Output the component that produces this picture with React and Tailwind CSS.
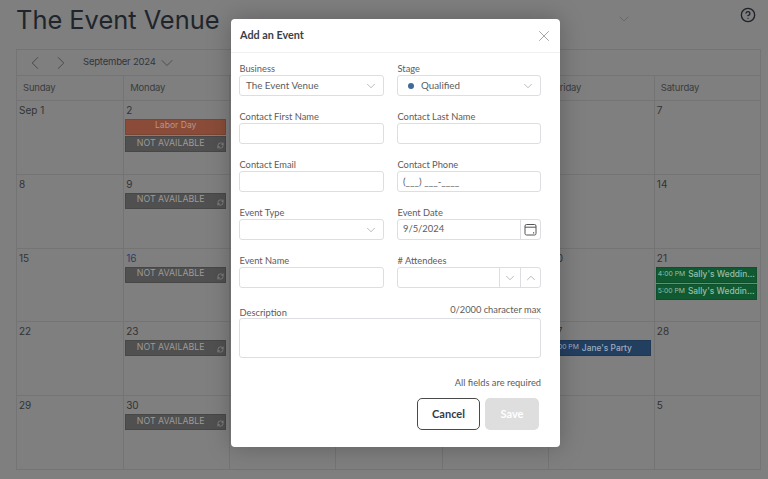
import React from "react";
import { ChevronDown, ChevronUp, ChevronLeft, ChevronRight, X, CircleHelp, RefreshCw } from "lucide-react";

const days = ["Sunday", "Monday", "", "", "", "Friday", "Saturday"];
const weeks = [
  ["Sep 1", "2", "", "", "", "", "7"],
  ["8", "9", "", "", "", "", "14"],
  ["15", "16", "", "", "", "20", "21"],
  ["22", "23", "", "", "", "27", "28"],
  ["29", "30", "", "", "", "", "5"],
];

function Bar({ className, children }) {
  return (
    <div className={`mx-[1px] mb-[1px] flex h-4 items-center overflow-hidden whitespace-nowrap border border-black/10 leading-none ${className}`}>
      {children}
    </div>
  );
}

function NotAvailable() {
  return (
    <Bar className="relative justify-center bg-[#505050] pb-[2px] text-[8.8px] text-[#9a9a9a]">
      <span className="mr-[10px]">NOT AVAILABLE</span>
      <RefreshCw size={7} strokeWidth={2} className="absolute right-[1px] top-[5px] text-[#9a9a9a]" />
    </Bar>
  );
}

function Timed({ time, name, className }) {
  return (
    <Bar className={`pb-[1px] pl-[1px] ${className}`}>
      <span className="mr-[3px] shrink-0 text-[6.8px]">{time}</span>
      <span className="text-[8.4px] font-medium">{name}</span>
    </Bar>
  );
}

function Events({ w, d }) {
  if (d === 1) {
    return (
      <>
        {w === 0 && <Bar className="justify-center bg-[#8a4c39] pb-[3px] text-[8.6px] text-[#b8958a]">Labor Day</Bar>}
        <NotAvailable />
      </>
    );
  }
  if (w === 2 && d === 6) {
    return (
      <>
        <Timed time="4:00 PM" name="Sally's Weddin..." className="bg-[#105a32] text-[#98bea9]" />
        <Timed time="5:00 PM" name="Sally's Weddin..." className="bg-[#105a32] text-[#98bea9]" />
      </>
    );
  }
  if (w === 3 && d === 5) {
    return <Timed time="6:00 PM" name="Jane's Party" className="bg-[#233f60] text-[#9dadc0]" />;
  }
  return null;
}

function Field({ label, children }) {
  return (
    <div className="flex h-[35px] flex-col">
      <div className="h-[14px] pl-[0.5px] pt-[2px] text-[9.3px] leading-[12px] text-[#5c5c5c]">{label}</div>
      {children}
    </div>
  );
}

function Box({ children, className = "" }) {
  return (
    <div className={`flex h-[21px] items-center rounded-[3px] border border-[#dcdee2] bg-white text-[9.8px] text-[#5c5c5c] ${className}`}>
      {children}
    </div>
  );
}

function Chevron() {
  return <ChevronDown size={14} strokeWidth={1} className="text-[#8a8a8a]" />;
}

export default function App() {
  return (
    <div className="relative h-[479px] w-[768px] overflow-hidden bg-[#7f7f7f] font-['Inter',sans-serif] text-[#383838]">
      <div className="flex h-[49px] items-start justify-between pl-4 pr-[12px]">
        <h1 className="mt-[7px] text-[25.4px] font-normal leading-[26px] text-[#20252c]">The Event Venue</h1>
        <div className="flex items-start gap-[108px]">
          <ChevronDown size={16} strokeWidth={1} className="mt-[11px] text-[#5e5e5e]" />
          <CircleHelp size={16} strokeWidth={2} className="mt-[7px] text-[#1d2228]" />
        </div>
      </div>

      <div className="ml-4 w-[745px] border border-[#747474]">
        <div className="flex h-[25px] items-center text-[9.5px] tracking-[-0.2px] text-[#30363e]">
          <ChevronLeft size={22} strokeWidth={1} className="ml-[7px] text-[#454545]" />
          <ChevronRight size={22} strokeWidth={1} className="ml-[4px] text-[#454545]" />
          <span className="ml-[11px]">September 2024</span>
          <ChevronDown size={20} strokeWidth={1} className="ml-[1px] text-[#454545]" />
        </div>
        <div className="grid h-[25px] grid-cols-7 border-t border-[#747474]">
          {days.map((d, i) => (
            <div key={i} className={`flex items-center px-[6px] text-[9.5px] tracking-[-0.2px] text-[#3c3c3c] ${i ? "border-l border-[#747474]" : ""}`}>
              {d}
            </div>
          ))}
        </div>
        {weeks.map((week, w) => (
          <div key={w} className="grid h-[73.8px] grid-cols-7 border-t border-[#747474]">
            {week.map((day, d) => (
              <div key={d} className={`pr-[2px] pt-[3px] ${d ? "border-l border-[#747474]" : ""}`}>
                <div className={`mb-[2px] h-[13px] pl-[2px] text-[10px] leading-[13px] ${w === 2 && d === 1 ? "text-[#1f3f6b]" : "text-[#333]"}`}>
                  {day}
                </div>
                <Events w={w} d={d} />
              </div>
            ))}
          </div>
        ))}
      </div>

      <div className="absolute left-[231px] top-[19px] h-[428px] w-[329px] rounded-[4px] bg-white font-['Lato',sans-serif] shadow-[0_0_24px_rgba(0,0,0,0.25)]">
        <div className="flex h-[34px] items-center justify-between border-b border-[#f0f0f0] pl-[9px] pr-[7px]">
          <span className="text-[10.8px] font-bold text-[#3a3f47]">Add an Event</span>
          <X size={18} strokeWidth={1} className="text-[#8a8a8a]" />
        </div>

        <div className="px-2 pt-[8px]">
          <div className="grid grid-cols-[145px_144px] gap-x-[13px] gap-y-[13px]">
            <Field label="Business">
              <Box className="justify-between pl-[6px] pr-[5px]">
                <span>The Event Venue</span>
                <Chevron />
              </Box>
            </Field>
            <Field label="Stage">
              <Box className="justify-between pl-[10px] pr-[5px]">
                <span className="flex items-center gap-[7px]">
                  <span className="h-[6px] w-[6px] rounded-full bg-[#3f6a9a]" />
                  Qualified
                </span>
                <Chevron />
              </Box>
            </Field>
            <Field label="Contact First Name"><Box /></Field>
            <Field label="Contact Last Name"><Box /></Field>
            <Field label="Contact Email"><Box /></Field>
            <Field label="Contact Phone">
              <Box className="pl-[5px]">(___) ___-____</Box>
            </Field>
            <Field label="Event Type">
              <Box className="justify-end pr-[5px]"><Chevron /></Box>
            </Field>
            <Field label="Event Date">
              <Box className="justify-between pl-[5px]">
                <span className="text-[9.4px]">9/5/2024</span>
                <span className="flex h-full w-[20px] items-center justify-center border-l border-[#dcdee2]">
                  <svg width="13" height="13" viewBox="0 0 13 13" fill="none" stroke="#555" strokeWidth="1">
                    <rect x="1" y="1.5" width="11" height="10.5" rx="1.5" />
                    <path d="M1 4.2h11" />
                    <path d="M9 9.8h1.2" strokeWidth="1.2" />
                  </svg>
                </span>
              </Box>
            </Field>
            <Field label="Event Name"><Box /></Field>
            <Field label="# Attendees">
              <Box className="justify-end">
                <span className="flex h-full w-[21px] items-center justify-center border-l border-[#dcdee2]"><Chevron /></span>
                <span className="flex h-full w-[20px] items-center justify-center border-l border-[#dcdee2]">
                  <ChevronUp size={14} strokeWidth={1} className="text-[#8a8a8a]" />
                </span>
              </Box>
            </Field>
          </div>

          <div className="mt-[16px] w-[302px]">
            <div className="flex h-[14px] items-center justify-between pl-[0.5px] text-[9.3px] leading-none text-[#5c5c5c]">
              <span className="mt-[3px]">Description</span>
              <span className="-mt-[2px]">0/2000 character max</span>
            </div>
            <div className="h-[40px] rounded-[3px] border border-[#dcdee2]" />
            <div className="mt-[18px] text-right text-[9.3px] leading-[13px] text-[#5c5c5c]">All fields are required</div>
            <div className="mt-[9px] flex justify-end gap-[5px] pr-[2px]">
              <button className="h-[32px] w-[63px] rounded-[5px] border border-[#4a4a4a] bg-white text-[11px] font-bold text-[#333b47]">Cancel</button>
              <button className="h-[32px] w-[54px] rounded-[5px] bg-[#dedede] text-[11px] font-bold text-white">Save</button>
            </div>
          </div>
        </div>
      </div>
    </div>
  );
}
